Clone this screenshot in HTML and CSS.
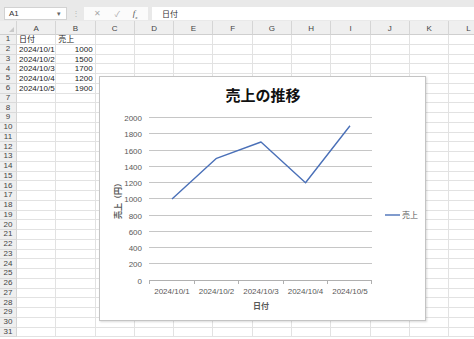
FILE: index.html
```html
<!DOCTYPE html>
<html lang="ja">
<head>
  <meta charset="UTF-8" />
  <title>Book1 - Excel</title>
  <link rel="stylesheet" href="styles.css">
</head>
<body>
  <!-- formula bar -->
  <div class="toolbar">
    <div class="namebox"><span>A1</span><span class="arrow">▾</span></div>
    <div class="grip">⋮</div>
    <div class="fx-buttons">
      <span>✕</span>
      <span>✓</span>
      <span class="fx">f<sub>x</sub></span>
    </div>
    <div class="formula">日付</div>
  </div>

  <div class="sheet-wrap">
    <div class="sheet" id="sheet"></div>

    <!-- floating chart -->
    <div class="chart">
      <svg width="325" height="243" viewBox="0 0 325 243">
        <text class="chart-title" x="163" y="24" text-anchor="middle">売上の推移</text>

        <g class="gridlines">
          <line x1="49" x2="272" y1="40.5" y2="40.5" />
          <line x1="49" x2="272" y1="56.5" y2="56.5" />
          <line x1="49" x2="272" y1="73.5" y2="73.5" />
          <line x1="49" x2="272" y1="89.5" y2="89.5" />
          <line x1="49" x2="272" y1="105.5" y2="105.5" />
          <line x1="49" x2="272" y1="121.5" y2="121.5" />
          <line x1="49" x2="272" y1="138.5" y2="138.5" />
          <line x1="49" x2="272" y1="154.5" y2="154.5" />
          <line x1="49" x2="272" y1="170.5" y2="170.5" />
          <line x1="49" x2="272" y1="186.5" y2="186.5" />
        </g>

        <g class="axis">
          <line x1="49" x2="272" y1="203.5" y2="203.5" />
          <line x1="49.5" x2="49.5" y1="203" y2="207" />
          <line x1="94.5" x2="94.5" y1="203" y2="207" />
          <line x1="138.5" x2="138.5" y1="203" y2="207" />
          <line x1="183.5" x2="183.5" y1="203" y2="207" />
          <line x1="227.5" x2="227.5" y1="203" y2="207" />
          <line x1="271.5" x2="271.5" y1="203" y2="207" />
        </g>

        <g class="tick-label" text-anchor="end">
          <text x="42" y="43.5">2000</text>
          <text x="42" y="59.5">1800</text>
          <text x="42" y="76.5">1600</text>
          <text x="42" y="92.5">1400</text>
          <text x="42" y="108.5">1200</text>
          <text x="42" y="124.5">1000</text>
          <text x="42" y="141.5">800</text>
          <text x="42" y="157.5">600</text>
          <text x="42" y="173.5">400</text>
          <text x="42" y="189.5">200</text>
          <text x="42" y="206.5">0</text>
        </g>

        <g class="tick-label" text-anchor="middle">
          <text x="72" y="216.5">2024/10/1</text>
          <text x="116.5" y="216.5">2024/10/2</text>
          <text x="161" y="216.5">2024/10/3</text>
          <text x="205.5" y="216.5">2024/10/4</text>
          <text x="250" y="216.5">2024/10/5</text>
        </g>

        <polyline class="series" points="72,122 116.5,81.3 161,65 205.5,105.7 250,48.7" />

        <text class="axis-title" x="161" y="231.5" text-anchor="middle">日付</text>
        <text class="axis-title" text-anchor="middle" transform="translate(21 122) rotate(-90)">売上（円）</text>

        <line class="series" x1="285" x2="300" y1="138" y2="138" />
        <text class="legend" x="302" y="141">売上</text>
      </svg>
    </div>
  </div>

  <script>
    const columns = ["A", "B", "C", "D", "E", "F", "G", "H", "I", "J", "K", "L"];
    const rows = {
      1: ["日付", "売上"],
      2: ["2024/10/1", 1000],
      3: ["2024/10/2", 1500],
      4: ["2024/10/3", 1700],
      5: ["2024/10/4", 1200],
      6: ["2024/10/5", 1900]
    };

    const sheet = document.getElementById("sheet");

    function cell(cls, text) {
      const div = document.createElement("div");
      div.className = cls;
      if (text !== undefined) div.textContent = text;
      sheet.appendChild(div);
    }

    cell("corner");
    columns.forEach(c => cell("col-head", c));

    for (let r = 1; r <= 31; r++) {
      cell("row-head", r);
      columns.forEach((c, i) => {
        const value = rows[r] ? rows[r][i] : undefined;
        cell(typeof value === "number" ? "cell num" : "cell", value);
      });
    }
  </script>
</body>
</html>
```

FILE: styles.css
```css
* {
  box-sizing: border-box;
}

html, body {
  margin: 0;
  padding: 0;
  overflow: hidden;
  background: #fff;
  font-family: "Liberation Sans", "Noto Sans CJK JP", sans-serif;
  color: #222;
}

.toolbar {
  display: flex;
  align-items: stretch;
  height: 21px;
  padding: 7px 0 1px 4px;
  background: #e9e9e9;
  font-size: 8px;
}

.namebox {
  display: flex;
  align-items: center;
  justify-content: space-between;
  width: 63px;
  padding: 0 5px 0 4px;
  background: #fff;
  border: 1px solid #d2d2d2;
  color: #333;
}

.namebox .arrow {
  font-size: 7px;
  color: #666;
}

.grip {
  display: flex;
  align-items: center;
  justify-content: center;
  width: 17px;
  color: #b5b5b5;
  font-size: 8px;
}

.fx-buttons {
  display: flex;
  align-items: center;
  justify-content: space-around;
  width: 64px;
  padding: 0 4px;
  background: #fbfbfb;
  color: #a8a8a8;
  font-size: 8px;
}

.fx-buttons .fx {
  font-family: "Liberation Serif", serif;
  font-style: italic;
  color: #555;
  font-size: 9px;
}

.fx-buttons .fx sub {
  font-size: 5px;
}

.formula {
  flex: 1;
  display: flex;
  align-items: center;
  margin-left: 4px;
  padding-left: 10px;
  background: #fff;
  color: #333;
}

.sheet-wrap {
  position: relative;
}

.sheet {
  display: grid;
  grid-template-columns: 17px repeat(12, 39.3px);
  grid-template-rows: 14px repeat(31, 9.75px);
  font-size: 8px;
}

.corner,
.col-head,
.row-head {
  background: #efefef;
  color: #444;
  border-right: 1px solid #d5d5d5;
  border-bottom: 1px solid #cfcfcf;
}

.corner {
  position: relative;
}

.corner::after {
  content: "";
  position: absolute;
  right: 2px;
  bottom: 2px;
  border-left: 5px solid transparent;
  border-bottom: 5px solid #c9c9c9;
}

.col-head {
  display: flex;
  align-items: center;
  justify-content: center;
  padding-top: 1px;
}

.row-head {
  display: flex;
  align-items: center;
  justify-content: center;
  line-height: 1;
  border-bottom-color: #dadada;
}

.cell {
  line-height: 9px;
  padding: 0 2px;
  white-space: nowrap;
  overflow: hidden;
  border-right: 1px solid #e2e2e2;
  border-bottom: 1px solid #e2e2e2;
  color: #222;
}

.cell.num {
  text-align: right;
}

.chart {
  position: absolute;
  left: 99px;
  top: 55px;
  width: 327px;
  height: 245px;
  background: #fff;
  border: 1px solid #c4c4c4;
  box-shadow: 1px 1px 2px rgba(0, 0, 0, 0.15);
}

.chart svg {
  display: block;
}

.chart-title {
  font-family: "Noto Sans CJK JP", sans-serif;
  font-size: 15px;
  font-weight: bold;
  fill: #111;
}

.gridlines line {
  stroke: #c6c6c6;
  stroke-width: 1;
}

.axis line {
  stroke: #b0b0b0;
  stroke-width: 1;
}

.tick-label {
  font-family: "Liberation Sans", sans-serif;
  font-size: 8px;
  fill: #595959;
}

.axis-title {
  font-family: "Noto Sans CJK JP", sans-serif;
  font-size: 8px;
  font-weight: bold;
  fill: #595959;
}

.series {
  fill: none;
  stroke: #4a70b8;
  stroke-width: 1.4;
  stroke-linejoin: round;
}

.legend {
  font-family: "Noto Sans CJK JP", sans-serif;
  font-size: 8px;
  fill: #595959;
}
```
